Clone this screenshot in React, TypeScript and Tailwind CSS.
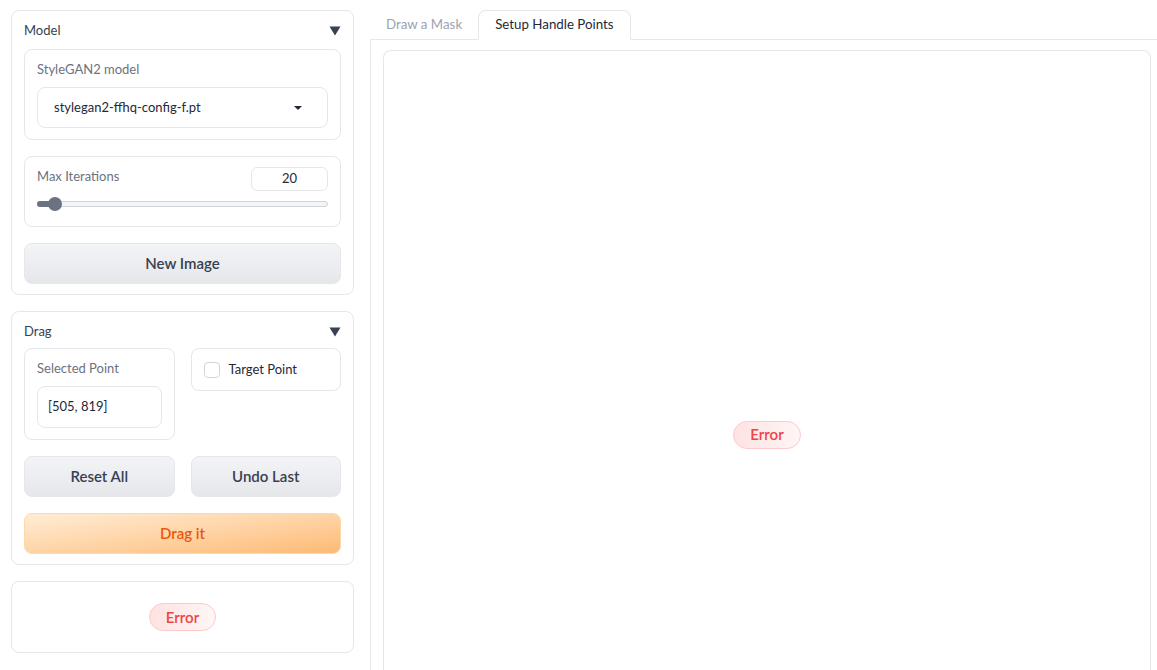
import { useState } from "react";

const font = { fontFamily: '"Source Sans Pro", Lato, "Noto Sans", sans-serif' };

const ErrorPill = () => (
  <span className="inline-flex h-[28px] items-center rounded-full border border-[#fecaca] bg-gradient-to-r from-[#fee2e2] to-[#fef6f6] px-4 text-[15px] font-semibold text-[#ef4444]">
    Error
  </span>
);

const Caret = () => (
  <svg width="12" height="10" viewBox="0 0 12 10" className="text-[#374151]">
    <path d="M0.5 0.5h11L6 9.5z" fill="currentColor" />
  </svg>
);

const Block = ({ className = "", children }: { className?: string; children: React.ReactNode }) => (
  <div className={`rounded-lg border border-[#e5e7eb] bg-white ${className}`}>{children}</div>
);

const GrayButton = ({ label }: { label: string }) => (
  <button className="h-[41px] w-full rounded-lg border border-[#e5e7eb] bg-gradient-to-b from-[#f3f4f6] to-[#e5e7eb] text-[15px] font-semibold text-[#374151]">
    {label}
  </button>
);

export default function App() {
  const [tab, setTab] = useState(1);
  const [checked, setChecked] = useState(false);

  return (
    <div style={font} className="flex h-[670px] gap-4 overflow-hidden bg-white pl-[11px] pt-[10px] text-[#374151]">
      {/* left column */}
      <div className="flex w-[343px] shrink-0 flex-col gap-4">
        <div className="rounded-lg border border-[#e5e7eb] px-3 pb-[10px] pt-[10px]">
          <div className="mb-[8px] flex h-[20px] items-center justify-between">
            <span className="text-[13px]">Model</span>
            <Caret />
          </div>
          <div className="flex flex-col gap-4">
            <Block className="px-3 pb-[11px] pt-[10px]">
              <div className="mb-[8px] text-[13px] leading-[19px] text-[#6b7280]">StyleGAN2 model</div>
              <div className="flex h-[41px] items-center justify-between rounded-lg border border-[#e5e7eb] pl-4 pr-[24px] text-[13px] text-[#1f2937]">
                <span>stylegan2-ffhq-config-f.pt</span>
                <svg width="10" height="6" viewBox="0 0 10 6">
                  <path d="M1 1h8L5 5z" fill="#1f2937" />
                </svg>
              </div>
            </Block>
            <Block className="px-3 pb-[15px] pt-[10px]">
              <div className="flex items-start justify-between">
                <span className="text-[13px] leading-[19px] text-[#6b7280]">Max Iterations</span>
                <div className="flex h-[24px] w-[77px] items-center justify-center rounded-md border border-[#e5e7eb] text-[13px] text-[#1f2937]">
                  20
                </div>
              </div>
              <div className="relative mt-[6px] h-[14px]">
                <div className="absolute left-0 right-0 top-[4px] h-[6px] rounded-full border border-[#d1d5db] bg-[#f3f4f6]" />
                <div className="absolute left-0 top-[4px] h-[6px] w-[18px] rounded-l-full bg-[#6b7280]" />
                <div className="absolute left-[11px] top-0 h-[14px] w-[14px] rounded-full bg-[#6b7280]" />
              </div>
            </Block>
            <GrayButton label="New Image" />
          </div>
        </div>

        <div className="rounded-lg border border-[#e5e7eb] px-3 pb-[10px] pt-[10px]">
          <div className="mb-[6px] flex h-[20px] items-center justify-between">
            <span className="text-[13px]">Drag</span>
            <Caret />
          </div>
          <div className="flex flex-col gap-4">
            <div className="grid grid-cols-2 items-start gap-4">
              <Block className="px-3 pb-[11px] pt-[10px]">
                <div className="mb-[8px] text-[13px] leading-[19px] text-[#6b7280]">Selected Point</div>
                <div className="flex h-[42px] items-center rounded-lg border border-[#e5e7eb] px-[10px] text-[13px] text-[#1f2937]">
                  [505, 819]
                </div>
              </Block>
              <Block className="flex h-[43px] items-center gap-[9px] px-3">
                <button
                  onClick={() => setChecked(!checked)}
                  className={`h-[16px] w-[16px] rounded-[4px] border border-[#d1d5db] ${checked ? "bg-[#f97316]" : "bg-white"}`}
                />
                <span className="text-[13px] text-[#1f2937]">Target Point</span>
              </Block>
            </div>
            <div className="grid grid-cols-2 gap-4">
              <GrayButton label="Reset All" />
              <GrayButton label="Undo Last" />
            </div>
            <button className="h-[41px] w-full rounded-lg border border-[#fed7aa] bg-gradient-to-br from-[#ffedd5] to-[#fdba74] text-[15px] font-semibold text-[#ea580c]">
              Drag it
            </button>
          </div>
        </div>

        <div className="flex h-[72px] items-center justify-center rounded-lg border border-[#e5e7eb]">
          <ErrorPill />
        </div>
      </div>

      {/* right column */}
      <div className="flex min-w-0 flex-1 flex-col">
        <div className="flex h-[30px] shrink-0 border-b border-[#e5e7eb]">
          {["Draw a Mask", "Setup Handle Points"].map((t, i) => (
            <button
              key={t}
              onClick={() => setTab(i)}
              className={`-mb-px px-4 text-[13.3px] ${
                tab === i
                  ? "rounded-t-lg border border-b-white border-[#e5e7eb] bg-white text-[#1f2937]"
                  : "text-[#9ca3af]"
              }`}
            >
              {t}
            </button>
          ))}
        </div>
        <div className="flex border-l border-[#e5e7eb] pl-3 pt-[10px] pr-[6px]">
          <div className="flex h-[768px] flex-1 items-center justify-center rounded-t-lg border border-b-0 border-[#e5e7eb]">
            <ErrorPill />
          </div>
        </div>
      </div>
    </div>
  );
}
